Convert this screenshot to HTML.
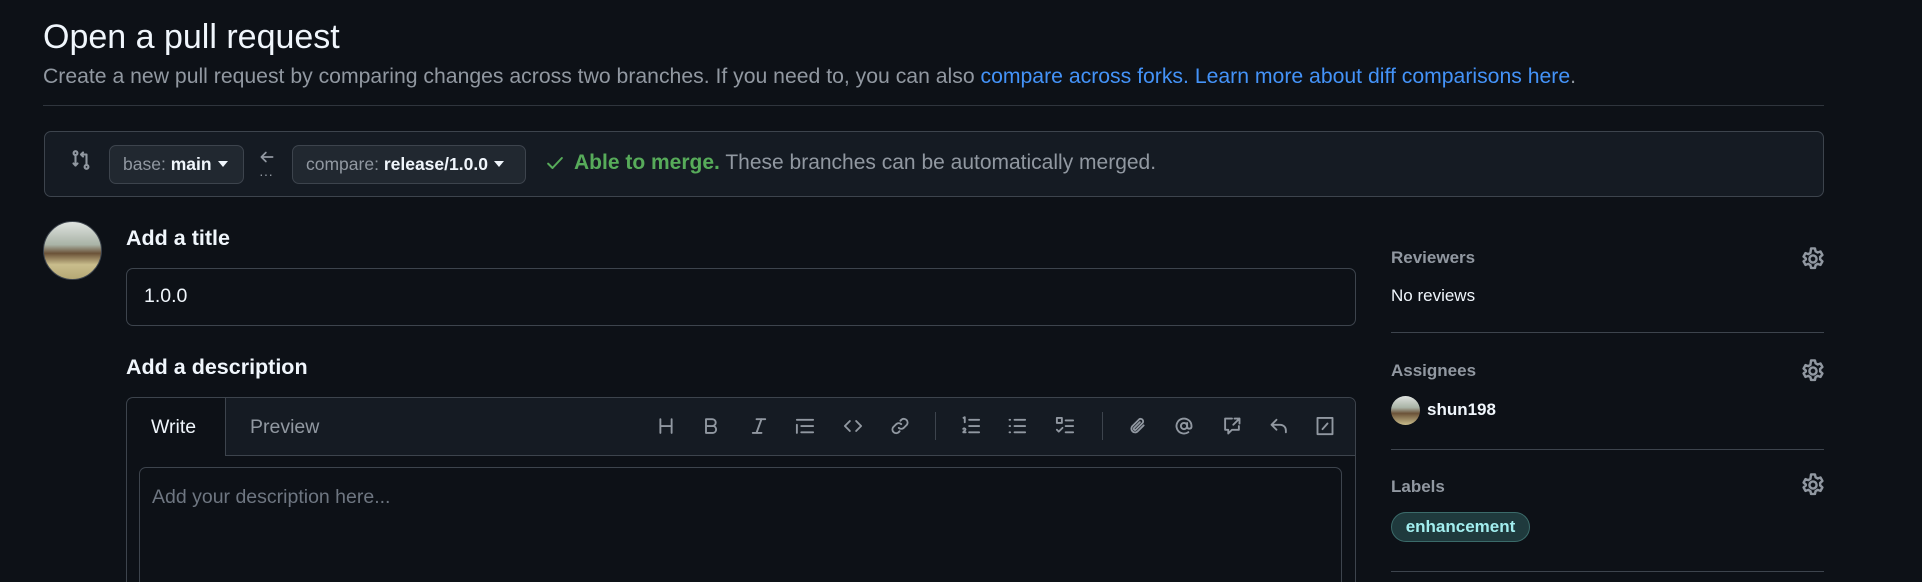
<!DOCTYPE html>
<html style="overflow:hidden;height:582px"><head><meta charset="utf-8"><style>
*{box-sizing:border-box;margin:0;padding:0}
body{width:1922px;height:582px;background:#0d1117;color:#f0f6fc;font-family:"Liberation Sans",sans-serif;position:relative;overflow:hidden}
.a{position:absolute;white-space:nowrap}
svg{fill:none;stroke:#9198a1;stroke-width:1.5;stroke-linecap:round;stroke-linejoin:round}
.btn{position:absolute;top:145px;height:39px;background:#212830;border:1px solid #3d444d;border-radius:7px;font-size:17.5px;color:#9198a1;line-height:37px;padding-left:13px}
.btn b{color:#f0f6fc;font-weight:bold}
.caret{display:inline-block;width:0;height:0;border-left:5px solid transparent;border-right:5px solid transparent;border-top:6px solid #f0f6fc;margin-left:6px;vertical-align:3px}
.sh{font-size:17px;color:#9198a1;font-weight:bold}
.hr{position:absolute;height:1px;background:#3d444d}
.ti{position:absolute;top:416px}
</style></head><body>
<div class="a" style="left:43px;top:18px;font-size:34px;color:#f0f6fc">Open a pull request</div>
<div class="a" style="left:43px;top:65px;font-size:21.2px;color:#9198a1">Create a new pull request by comparing changes across two branches. If you need to, you can also <span style="color:#4493f8">compare across forks.</span> <span style="color:#4493f8">Learn more about diff comparisons here</span>.</div>
<div class="hr" style="left:43px;top:105px;width:1781px;background:#2f353d"></div>

<div style="position:absolute;left:44px;top:131px;width:1780px;height:66px;background:#151b23;border:1px solid #3d444d;border-radius:7px"></div>
<svg class="a" style="left:70px;top:149px" width="22" height="22" viewBox="0 0 16 16"><circle cx="4" cy="3" r="1.4"/><path d="M4 4.5v7.5"/><path d="M4 12l-1.5-1.5M4 12l1.5-1.5"/><circle cx="12" cy="13" r="1.4"/><path d="M12 11.5V4H8M8 4l1.5-1.5M8 4l1.5 1.5"/></svg>
<div class="btn" style="left:109px;width:135px">base: <b>main</b><span class="caret"></span></div>
<svg class="a" style="left:258px;top:148px" width="18" height="18" viewBox="0 0 16 16"><path d="M13 8H3M7 4L3 8l4 4"/></svg>
<div class="a" style="left:259px;top:166px;font-size:14px;color:#9198a1">···</div>
<div class="btn" style="left:292px;width:234px">compare: <b>release/1.0.0</b><span class="caret"></span></div>
<svg class="a" style="left:545px;top:153px;stroke:#57ab5a;stroke-width:1.6" width="20" height="20" viewBox="0 0 16 16"><path d="M2.5 8.5l3.5 3.5 7.5-8"/></svg>
<div class="a" style="left:574px;top:151px;font-size:21px;color:#9198a1"><b style="color:#57ab5a">Able to merge.</b> These branches can be automatically merged.</div>

<div style="position:absolute;left:43px;top:221px;width:59px;height:59px;border-radius:50%;background:linear-gradient(#dfe3e0 0%,#a9b3a6 40%,#6b5238 55%,#c9bd8c 75%,#b5a875 100%);border:1px solid #3d444d"></div>
<div class="a" style="left:126px;top:226px;font-size:21.5px;font-weight:bold">Add a title</div>
<div style="position:absolute;left:126px;top:268px;width:1230px;height:58px;border:1px solid #3d444d;border-radius:7px;background:#0d1117"></div>
<div class="a" style="left:144px;top:285px;font-size:19.5px">1.0.0</div>
<div class="a" style="left:126px;top:355px;font-size:21.5px;font-weight:bold">Add a description</div>

<div style="position:absolute;left:126px;top:397px;width:1230px;height:185px;border:1px solid #3d444d;border-bottom:none;border-radius:7px 7px 0 0;background:#0d1117"></div>
<div style="position:absolute;left:226px;top:398px;width:1129px;height:58px;background:#151b23;border-bottom:1px solid #3d444d;border-top-right-radius:7px"></div>
<div style="position:absolute;left:225px;top:398px;width:1px;height:58px;background:#3d444d"></div>
<div class="a" style="left:151px;top:416px;font-size:19.5px">Write</div>
<div class="a" style="left:250px;top:416px;font-size:19.5px;color:#9198a1">Preview</div>
<div style="position:absolute;left:139px;top:467px;width:1203px;height:115px;border:1px solid #3d444d;border-bottom:none;border-radius:7px 7px 0 0"></div>
<div class="a" style="left:152px;top:486px;font-size:19.5px;color:#6e7681">Add your description here...</div>

<svg class="ti" style="left:656px" width="20" height="20" viewBox="0 0 16 16"><path d="M3.5 2.5v11M12.5 2.5v11M3.5 8h9"/></svg>
<svg class="ti" style="left:701px" width="20" height="20" viewBox="0 0 16 16"><path d="M4 2.5h5a2.7 2.7 0 010 5.5H4zM4 8h5.8a2.8 2.8 0 010 5.5H4z"/></svg>
<svg class="ti" style="left:749px" width="20" height="20" viewBox="0 0 16 16"><path d="M6 2.5h7M3 13.5h7M10 2.5l-4 11"/></svg>
<svg class="ti" style="left:795px" width="20" height="20" viewBox="0 0 16 16"><path d="M1.5 3h13M5 8h9.5M5 13h9.5M1.5 7v6.5"/></svg>
<svg class="ti" style="left:843px" width="20" height="20" viewBox="0 0 16 16"><path d="M5.5 4L1.5 8l4 4M10.5 4l4 4-4 4"/></svg>
<svg class="ti" style="left:890px" width="20" height="20" viewBox="0 0 16 16"><path d="M7 9.5a3 3 0 004 0l2.5-2.5a3 3 0 00-4-4.3L8.3 3.8M9 6.5a3 3 0 00-4 0L2.5 9a3 3 0 004 4.3l1.2-1.1"/></svg>
<div style="position:absolute;left:935px;top:412px;width:1px;height:28px;background:#3d444d"></div>
<svg class="ti" style="left:961px" width="20" height="20" viewBox="0 0 16 16"><path d="M6.5 3h8M6.5 8h8M6.5 13h8M2 1.5l1-.5v4M1.8 10.3a1 1 0 011.8.4c0 .8-1.8 1.6-1.8 2.3h1.9"/></svg>
<svg class="ti" style="left:1007px" width="20" height="20" viewBox="0 0 16 16"><path d="M6 3h8.5M6 8h8.5M6 13h8.5M2 3h.5M2 8h.5M2 13h.5"/></svg>
<svg class="ti" style="left:1055px" width="20" height="20" viewBox="0 0 16 16"><path d="M8.5 3.5h6M8.5 8h6M8.5 13h6M1.5 1.5h4v4h-4zM1.5 11l1.5 1.5 3-3"/></svg>
<div style="position:absolute;left:1102px;top:412px;width:1px;height:28px;background:#3d444d"></div>
<svg class="ti" style="left:1128px" width="20" height="20" viewBox="0 0 16 16"><path d="M12.5 7.5L7.5 12.5a3 3 0 01-4.2-4.2l5.6-5.6a2 2 0 012.8 2.8L6.2 11a1 1 0 01-1.4-1.4l4.7-4.7"/></svg>
<svg class="ti" style="left:1174px" width="20" height="20" viewBox="0 0 16 16"><circle cx="8" cy="8" r="2.5"/><path d="M10.5 5.5v3.3a1.8 1.8 0 003.5 0V8a6 6 0 10-2.5 4.9"/></svg>
<svg class="ti" style="left:1222px" width="20" height="20" viewBox="0 0 16 16"><path d="M8 2H2.5v9H5v3l3-3h5.5V8M10 2h4v4M14 2L9 7"/></svg>
<svg class="ti" style="left:1269px" width="20" height="20" viewBox="0 0 16 16"><path d="M6 3L2 7l4 4M2 7h7a4.5 4.5 0 014.5 4.5V13"/></svg>
<svg class="ti" style="left:1315px" width="20" height="20" viewBox="0 0 16 16"><path d="M2 1.5h12v13H2zM10 6l-4 4.5"/></svg>

<div class="a sh" style="left:1391px;top:248px">Reviewers</div>
<div class="a" style="left:1391px;top:286px;font-size:17px">No reviews</div>
<div class="hr" style="left:1391px;top:332px;width:433px"></div>
<div class="a sh" style="left:1391px;top:361px">Assignees</div>
<div style="position:absolute;left:1391px;top:396px;width:29px;height:29px;border-radius:50%;background:linear-gradient(#dfe3e0,#a9b3a6 40%,#6b5238 60%,#c9bd8c)"></div>
<div class="a" style="left:1427px;top:400px;font-size:17px;font-weight:bold">shun198</div>
<div class="hr" style="left:1391px;top:449px;width:433px"></div>
<div class="a sh" style="left:1391px;top:477px">Labels</div>
<div class="a" style="left:1391px;top:512px;width:139px;height:30px;border-radius:15px;background:#1f3a3d;border:1px solid #3b6b6a;color:#a2eeef;font-size:17px;font-weight:bold;line-height:28px;text-align:center">enhancement</div>
<div class="hr" style="left:1391px;top:571px;width:433px"></div>

<svg class="a" style="left:1800px;top:246px" width="26" height="26" viewBox="0 0 16 16"><circle cx="8" cy="8" r="2.2"/><path d="M6.8 1.5h2.4l.4 1.8 1.3.7 1.7-.6 1.2 2.1-1.4 1.2v1.6l1.4 1.2-1.2 2.1-1.7-.6-1.3.7-.4 1.8H6.8l-.4-1.8-1.3-.7-1.7.6-1.2-2.1 1.4-1.2V7.7L2.2 6.5l1.2-2.1 1.7.6 1.3-.7z"/></svg>
<svg class="a" style="left:1800px;top:358px" width="26" height="26" viewBox="0 0 16 16"><circle cx="8" cy="8" r="2.2"/><path d="M6.8 1.5h2.4l.4 1.8 1.3.7 1.7-.6 1.2 2.1-1.4 1.2v1.6l1.4 1.2-1.2 2.1-1.7-.6-1.3.7-.4 1.8H6.8l-.4-1.8-1.3-.7-1.7.6-1.2-2.1 1.4-1.2V7.7L2.2 6.5l1.2-2.1 1.7.6 1.3-.7z"/></svg>
<svg class="a" style="left:1800px;top:472px" width="26" height="26" viewBox="0 0 16 16"><circle cx="8" cy="8" r="2.2"/><path d="M6.8 1.5h2.4l.4 1.8 1.3.7 1.7-.6 1.2 2.1-1.4 1.2v1.6l1.4 1.2-1.2 2.1-1.7-.6-1.3.7-.4 1.8H6.8l-.4-1.8-1.3-.7-1.7.6-1.2-2.1 1.4-1.2V7.7L2.2 6.5l1.2-2.1 1.7.6 1.3-.7z"/></svg>
</body></html>
